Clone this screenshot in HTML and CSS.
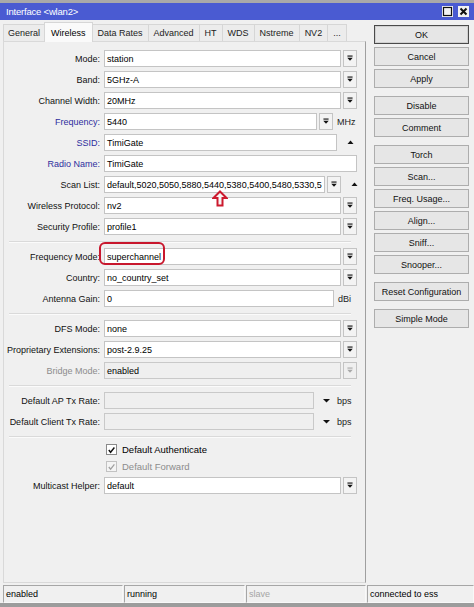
FILE: index.html
```html
<!DOCTYPE html>
<html>
<head>
<meta charset="utf-8">
<link rel="stylesheet" href="styles.css">
</head>
<body>
<div class="win">
  <div class="title">
    <span class="ttext">Interface &lt;wlan2&gt;</span>
    <div class="tbtns">
      <span class="tb"><svg width="11" height="11" viewBox="0 0 11 11"><rect x="1.5" y="1.5" width="8" height="8" fill="none" stroke="#111" stroke-width="1.2"/></svg></span>
      <span class="tb"><svg width="11" height="11" viewBox="0 0 11 11"><path d="M2.5 2.5 L8.5 8.5 M8.5 2.5 L2.5 8.5" stroke="#111" stroke-width="2"/></svg></span>
    </div>
  </div>
  <div class="main">
    <div class="left">
      <div class="tabs">
        <span class="tab">General</span>
        <span class="tab sel">Wireless</span>
        <span class="tab">Data Rates</span>
        <span class="tab">Advanced</span>
        <span class="tab">HT</span>
        <span class="tab">WDS</span>
        <span class="tab">Nstreme</span>
        <span class="tab">NV2</span>
        <span class="tab">...</span>
      </div>
      <div class="panel">
        <div class="group">
          <div class="row"><span class="lbl">Mode:</span><div class="field"><div class="in">station</div><span class="dd"><svg width="14" height="17" viewBox="0 0 14 17"><rect x="4" y="5" width="6" height="1.3" fill="#111"/><path d="M3.8 7.5 H10.2 L7 11 Z" fill="#111"/></svg></span></div></div>
          <div class="row"><span class="lbl">Band:</span><div class="field"><div class="in">5GHz-A</div><span class="dd"><svg width="14" height="17" viewBox="0 0 14 17"><rect x="4" y="5" width="6" height="1.3" fill="#111"/><path d="M3.8 7.5 H10.2 L7 11 Z" fill="#111"/></svg></span></div></div>
          <div class="row"><span class="lbl">Channel Width:</span><div class="field"><div class="in">20MHz</div><span class="dd"><svg width="14" height="17" viewBox="0 0 14 17"><rect x="4" y="5" width="6" height="1.3" fill="#111"/><path d="M3.8 7.5 H10.2 L7 11 Z" fill="#111"/></svg></span></div></div>
          <div class="row"><span class="lbl blue">Frequency:</span><div class="field"><div class="in">5440</div><span class="dd"><svg width="14" height="17" viewBox="0 0 14 17"><rect x="4" y="5" width="6" height="1.3" fill="#111"/><path d="M3.8 7.5 H10.2 L7 11 Z" fill="#111"/></svg></span><span class="unit">MHz</span></div></div>
          <div class="row"><span class="lbl blue">SSID:</span><div class="field"><div class="in">TimiGate</div><span class="up"><svg width="13" height="17" viewBox="0 0 13 17"><path d="M3.5 10 H9.5 L6.5 6.5 Z" fill="#111"/></svg></span></div></div>
          <div class="row"><span class="lbl blue">Radio Name:</span><div class="field"><div class="in">TimiGate</div></div></div>
          <div class="row"><span class="lbl">Scan List:</span><div class="field"><div class="in">default,5020,5050,5880,5440,5380,5400,5480,5330,5</div><span class="dd"><svg width="14" height="17" viewBox="0 0 14 17"><rect x="4" y="5" width="6" height="1.3" fill="#111"/><path d="M3.8 7.5 H10.2 L7 11 Z" fill="#111"/></svg></span><span class="up"><svg width="13" height="17" viewBox="0 0 13 17"><path d="M3.5 10 H9.5 L6.5 6.5 Z" fill="#111"/></svg></span>
            <svg class="arrow" width="16" height="17" viewBox="0 0 16 17"><path d="M8 1.5 L14.5 8 H10.5 V15.5 H5.5 V8 H1.5 Z" fill="#f6f6f6" stroke="#cc1a2e" stroke-width="2" stroke-linejoin="miter"/></svg>
          </div></div>
          <div class="row"><span class="lbl">Wireless Protocol:</span><div class="field"><div class="in">nv2</div><span class="dd"><svg width="14" height="17" viewBox="0 0 14 17"><rect x="4" y="5" width="6" height="1.3" fill="#111"/><path d="M3.8 7.5 H10.2 L7 11 Z" fill="#111"/></svg></span></div></div>
          <div class="row"><span class="lbl">Security Profile:</span><div class="field"><div class="in">profile1</div><span class="dd"><svg width="14" height="17" viewBox="0 0 14 17"><rect x="4" y="5" width="6" height="1.3" fill="#111"/><path d="M3.8 7.5 H10.2 L7 11 Z" fill="#111"/></svg></span></div></div>
        </div>
        <div class="sep"></div>
        <div class="group">
          <div class="row"><span class="lbl">Frequency Mode:</span><div class="field"><div class="in">superchannel</div><span class="dd"><svg width="14" height="17" viewBox="0 0 14 17"><rect x="4" y="5" width="6" height="1.3" fill="#111"/><path d="M3.8 7.5 H10.2 L7 11 Z" fill="#111"/></svg></span><span class="ring"></span></div></div>
          <div class="row"><span class="lbl">Country:</span><div class="field"><div class="in">no_country_set</div><span class="dd"><svg width="14" height="17" viewBox="0 0 14 17"><rect x="4" y="5" width="6" height="1.3" fill="#111"/><path d="M3.8 7.5 H10.2 L7 11 Z" fill="#111"/></svg></span></div></div>
          <div class="row"><span class="lbl">Antenna Gain:</span><div class="field"><div class="in">0</div><span class="unit u2">dBi</span></div></div>
        </div>
        <div class="sep"></div>
        <div class="group">
          <div class="row"><span class="lbl">DFS Mode:</span><div class="field"><div class="in">none</div><span class="dd"><svg width="14" height="17" viewBox="0 0 14 17"><rect x="4" y="5" width="6" height="1.3" fill="#111"/><path d="M3.8 7.5 H10.2 L7 11 Z" fill="#111"/></svg></span></div></div>
          <div class="row"><span class="lbl">Proprietary Extensions:</span><div class="field"><div class="in">post-2.9.25</div><span class="dd"><svg width="14" height="17" viewBox="0 0 14 17"><rect x="4" y="5" width="6" height="1.3" fill="#111"/><path d="M3.8 7.5 H10.2 L7 11 Z" fill="#111"/></svg></span></div></div>
          <div class="row"><span class="lbl gray">Bridge Mode:</span><div class="field"><div class="in dis">enabled</div><span class="dd dis"><svg width="14" height="17" viewBox="0 0 14 17"><rect x="4" y="5" width="6" height="1.3" fill="#a8a8a8"/><path d="M3.8 7.5 H10.2 L7 11 Z" fill="#a8a8a8"/></svg></span></div></div>
        </div>
        <div class="sep"></div>
        <div class="group">
          <div class="row"><span class="lbl">Default AP Tx Rate:</span><div class="field"><div class="in dis"></div><span class="down"><svg width="13" height="17" viewBox="0 0 13 17"><path d="M3 7 H10 L6.5 10.5 Z" fill="#111"/></svg></span><span class="unit">bps</span></div></div>
          <div class="row"><span class="lbl">Default Client Tx Rate:</span><div class="field"><div class="in dis"></div><span class="down"><svg width="13" height="17" viewBox="0 0 13 17"><path d="M3 7 H10 L6.5 10.5 Z" fill="#111"/></svg></span><span class="unit">bps</span></div></div>
        </div>
        <div class="sep"></div>
        <div class="group">
          <div class="crow"><span class="cb"><svg width="10" height="10" viewBox="0 0 10 10"><path d="M2 5 L4 7.5 L8.2 2.2" fill="none" stroke="#111" stroke-width="1.6"/></svg></span><span class="ctext">Default Authenticate</span></div>
          <div class="crow"><span class="cb dis"><svg width="10" height="10" viewBox="0 0 10 10"><path d="M2 5 L4 7.5 L8.2 2.2" fill="none" stroke="#a0a0a0" stroke-width="1.4"/></svg></span><span class="ctext gray">Default Forward</span></div>
          <div class="row"><span class="lbl">Multicast Helper:</span><div class="field"><div class="in">default</div><span class="dd"><svg width="14" height="17" viewBox="0 0 14 17"><rect x="4" y="5" width="6" height="1.3" fill="#111"/><path d="M3.8 7.5 H10.2 L7 11 Z" fill="#111"/></svg></span></div></div>
        </div>
      </div>
    </div>
    <div class="btns">
      <div class="bgroup">
        <span class="btn def">OK</span>
        <span class="btn">Cancel</span>
        <span class="btn">Apply</span>
      </div>
      <div class="bgroup">
        <span class="btn">Disable</span>
        <span class="btn">Comment</span>
      </div>
      <div class="bgroup">
        <span class="btn">Torch</span>
        <span class="btn">Scan...</span>
        <span class="btn">Freq. Usage...</span>
        <span class="btn">Align...</span>
        <span class="btn">Sniff...</span>
        <span class="btn">Snooper...</span>
      </div>
      <div class="bgroup">
        <span class="btn">Reset Configuration</span>
      </div>
      <div class="bgroup">
        <span class="btn">Simple Mode</span>
      </div>
    </div>
  </div>
  <div class="status">
    <span class="cell c1">enabled</span>
    <span class="cell c2">running</span>
    <span class="cell c3 gray2">slave</span>
    <span class="cell c4">connected to ess</span>
  </div>
</div>
</body>
</html>
```
FILE: styles.css
```css
* { box-sizing: border-box; }
html, body { margin: 0; padding: 0; }
body {
  width: 474px;
  height: 607px;
  overflow: hidden;
  background: #f0f0f0;
  font-family: "Liberation Sans", Arial, sans-serif;
  font-size: 9px;
  color: #000;
}
.win {
  width: 474px;
  height: 607px;
  display: flex;
  flex-direction: column;
  background: #f0f0f0;
}
.title {
  height: 20px;
  border-top: 3px solid #a9a9a9;
  background: #4a5bd2;
  color: #fff;
  display: flex;
  align-items: center;
  justify-content: space-between;
  padding: 0 5px 0 6px;
  font-size: 9.5px;
}
.ttext { letter-spacing: -0.2px; }
.tbtns { display: flex; gap: 5px; }
.tb {
  width: 11px;
  height: 11px;
  background: #f2f2f2;
  display: flex;
}
.main {
  flex: 1;
  display: flex;
  min-height: 0;
}
.left {
  margin-left: 3px;
  width: 363px;
  padding-top: 2px;
  padding-bottom: 1px;
  display: flex;
  flex-direction: column;
}
.tabs {
  height: 19px;
  display: flex;
  align-items: flex-end;
  position: relative;
  z-index: 1;
}
.tab {
  height: 17px;
  padding: 0 5px;
  border: 1px solid #d6d6d6;
  border-bottom: none;
  border-left: none;
  background: #ececec;
  display: flex;
  align-items: center;
  white-space: nowrap;
  color: #222;
}
.tab:first-child { border-left: 1px solid #d6d6d6; padding: 0 4px; }
.tab.sel {
  height: 20px;
  margin-bottom: -1px;
  background: #fafafa;
  padding: 0 6px;
  border-left: 1px solid #d6d6d6;
  margin-left: -1px;
  color: #000;
}
.panel {
  flex: 1;
  background: #f0f0f0;
  border: 1px solid #d9d9d9;
  border-right: 1px solid #9f9f9f;
  padding: 8px 8px 0 0;
  display: flex;
  flex-direction: column;
}
.group {
  display: flex;
  flex-direction: column;
  gap: 4px;
}
.sep {
  height: 2px;
  margin: 6px 6px 5px 5px;
  border-top: 1px solid #dadada;
  border-bottom: 1px solid #fbfbfb;
}
.row {
  display: grid;
  grid-template-columns: 96px 1fr;
  column-gap: 4px;
  height: 17px;
  align-items: center;
}
.lbl {
  text-align: right;
  white-space: nowrap;
  color: #111;
}
.lbl.blue { color: #2e2e9e; }
.lbl.gray, .gray { color: #8c8c8c; }
.field {
  display: flex;
  gap: 2px;
  height: 17px;
  align-items: stretch;
  position: relative;
}
.in {
  flex: 1;
  min-width: 0;
  background: #fff;
  border: 1px solid #c4c4c4;
  padding: 0 2px;
  display: flex;
  align-items: center;
  white-space: nowrap;
  overflow: hidden;
}
.in.dis { background: #efefef; border-color: #c9c9c9; }
.dd {
  width: 14px;
  background: #f3f3f3;
  border: 1px solid #c4c4c4;
  display: flex;
  align-items: center;
  justify-content: center;
}
.dd svg { display: block; }
.dd.dis { background: #efefef; }
.up, .down {
  width: 13px;
  display: flex;
  align-items: center;
  justify-content: center;
}
.up { margin-left: 5px; }
.down { margin-left: 4px; }
.unit {
  width: 22px;
  display: flex;
  align-items: center;
  padding-left: 2px;
  color: #222;
}
.unit.u2 { width: 21px; }
.crow {
  height: 13px;
  display: flex;
  align-items: center;
  padding-left: 102px;
  gap: 5px;
}
.cb {
  width: 11px;
  height: 11px;
  background: #fff;
  border: 1px solid #8a8a8a;
  display: flex;
  align-items: center;
  justify-content: center;
}
.cb.dis { border-color: #c2c2c2; background: #f4f4f4; }
.ctext { font-size: 9.5px; }
.ring {
  position: absolute;
  left: -5px;
  top: -6px;
  width: 66px;
  height: 23px;
  border: 2px solid #c8172d;
  border-radius: 6px;
  pointer-events: none;
  z-index: 5;
}
.arrow {
  position: absolute;
  left: 108px;
  top: 14px;
  z-index: 5;
}
.btns {
  margin-left: 8px;
  width: 95px;
  padding-top: 5px;
  display: flex;
  flex-direction: column;
  gap: 8px;
}
.bgroup {
  display: flex;
  flex-direction: column;
  gap: 3px;
}
.btn {
  height: 19px;
  background: #e6e6e6;
  border: 1px solid #adadad;
  display: flex;
  align-items: center;
  justify-content: center;
  white-space: nowrap;
  color: #111;
}
.btn.def { border: 1px solid #4a4a4a; box-shadow: inset 0 0 0 1px #d0d0d0; }
.status {
  height: 23px;
  padding: 1px 0 0 3px;
  border-bottom: 4px solid #9c9c9c;
  display: flex;
  gap: 1px;
}
.cell {
  height: 18px;
  border-top: 1px solid #a6a6a6;
  border-left: 1px solid #a6a6a6;
  border-bottom: 1px solid #f8f8f8;
  border-right: 1px solid #f8f8f8;
  padding: 0 2px;
  display: flex;
  align-items: center;
  white-space: nowrap;
}
.c1 { width: 120px; }
.c2 { width: 121px; }
.c3 { width: 120px; }
.c4 { flex: 1; }
.gray2 { color: #a5a5a5; }
```
